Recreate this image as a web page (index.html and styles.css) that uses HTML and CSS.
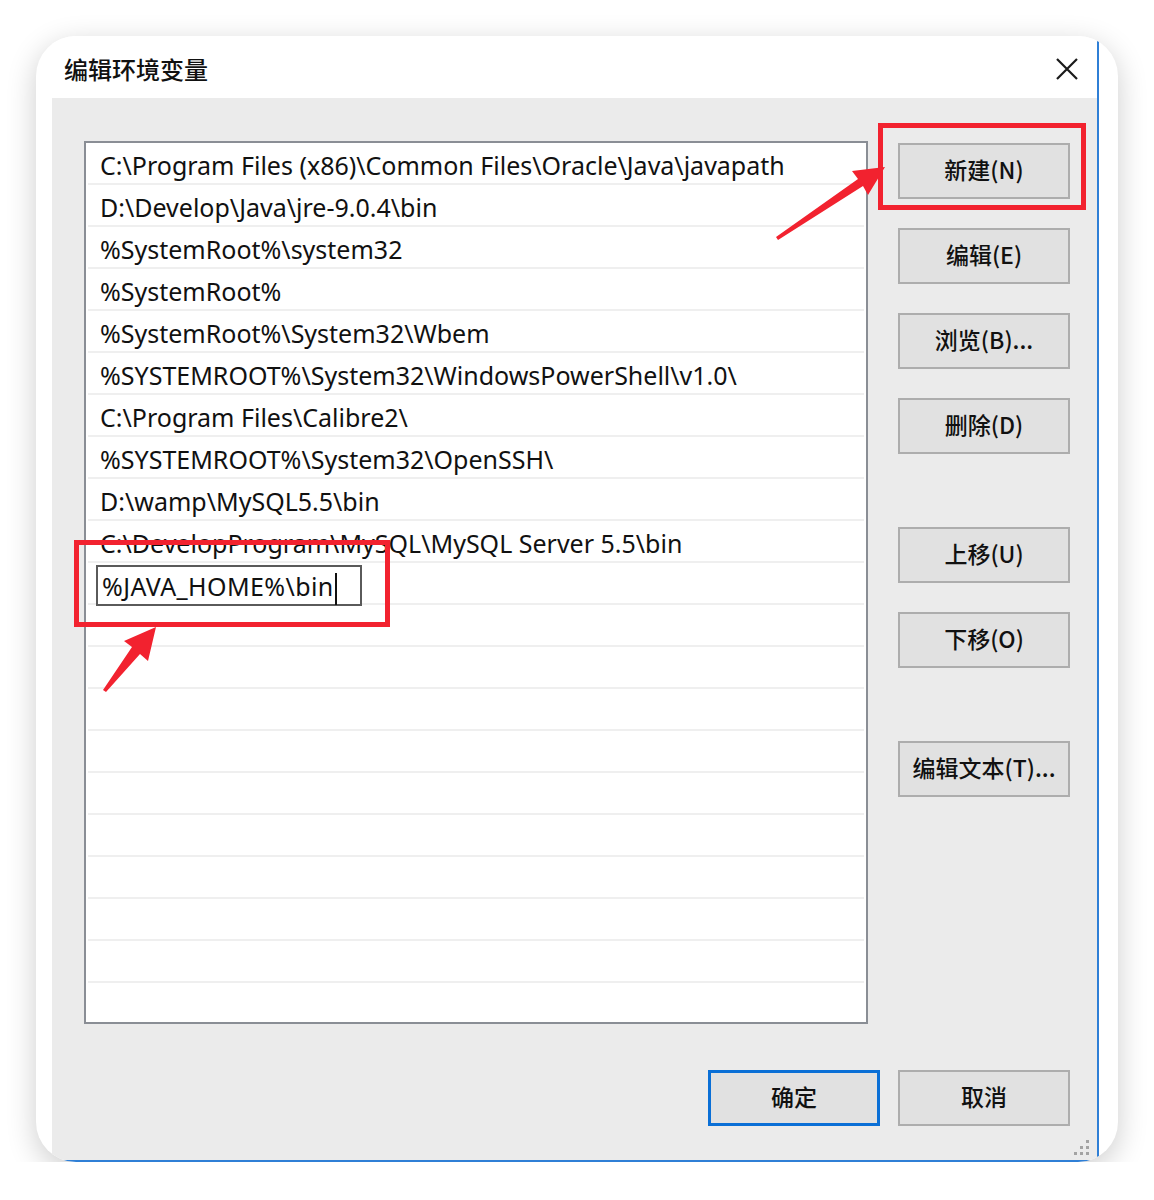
FILE: index.html
```html
<!DOCTYPE html>
<html lang="zh-CN">
<head>
	<meta charset="UTF-8">
	<title>编辑环境变量</title>
	<link rel="stylesheet" href="styles.css">
</head>
<body>
<div class="card">
	<div class="dialog">
		<div class="titlebar">
			<span class="title">编辑环境变量</span>
			<svg class="close" width="22" height="22" viewBox="0 0 22 22"><path d="M1 1L21 21M21 1L1 21" stroke="#1a1a1a" stroke-width="2.2" fill="none"/></svg>
		</div>
		<div class="content">
			<div class="main">
				<ul class="list">
					<li>C:\Program Files (x86)\Common Files\Oracle\Java\javapath</li>
					<li>D:\Develop\Java\jre-9.0.4\bin</li>
					<li>%SystemRoot%\system32</li>
					<li>%SystemRoot%</li>
					<li>%SystemRoot%\System32\Wbem</li>
					<li>%SYSTEMROOT%\System32\WindowsPowerShell\v1.0\</li>
					<li>C:\Program Files\Calibre2\</li>
					<li>%SYSTEMROOT%\System32\OpenSSH\</li>
					<li>D:\wamp\MySQL5.5\bin</li>
					<li>C:\DevelopProgram\MySQL\MySQL Server 5.5\bin</li>
					<li class="editing"><span class="edit">%JAVA_HOME%\bin<i class="caret"></i></span></li>
					<li></li>
					<li></li>
					<li></li>
					<li></li>
					<li></li>
					<li></li>
					<li></li>
					<li></li>
					<li></li>
					<li class="last"></li>
				</ul>
				<div class="side">
					<button class="btn">新建(N)</button>
					<button class="btn">编辑(E)</button>
					<button class="btn">浏览(B)...</button>
					<button class="btn">删除(D)</button>
					<button class="btn far">上移(U)</button>
					<button class="btn">下移(O)</button>
					<button class="btn far">编辑文本(T)...</button>
				</div>
			</div>
			<div class="footer">
				<button class="btn primary">确定</button>
				<button class="btn">取消</button>
			</div>
			<svg class="grip" width="16" height="16" viewBox="0 0 16 16" fill="#a3a3a3">
				<rect x="12" y="0" width="3" height="3"/>
				<rect x="6" y="6" width="3" height="3"/><rect x="12" y="6" width="3" height="3"/>
				<rect x="0" y="12" width="3" height="3"/><rect x="6" y="12" width="3" height="3"/><rect x="12" y="12" width="3" height="3"/>
			</svg>
		</div>
	</div>
</div>
<div class="watermark">CSDN @努力的IT小胖子</div>

<!-- 标注：红框和箭头 -->
<svg class="marks" width="1154" height="1200" viewBox="0 0 1154 1200">
	<rect x="880.5" y="125.5" width="203" height="82" fill="none" stroke="#f2222f" stroke-width="5"/>
	<rect x="76.5" y="542.5" width="311" height="82" fill="none" stroke="#f2222f" stroke-width="5"/>
	<polygon fill="#f2222f" points="776,237 858,179 852,171 885,167 868,195 863,186 778,240"/>
	<polygon fill="#f2222f" points="103,690 132,647 124,641 156,627 148,661 140,654 106,692"/>
</svg>
</body>
</html>
```

FILE: styles.css
```css
body{
	margin:0;
	background:#fff;
	font-family:"Noto Sans","Noto Sans CJK SC",sans-serif;
	color:#111;
}
.card{
	margin:36px 0 0 36px;
	width:1082px;
	height:1126px;
	border-radius:40px;
	background:#fff;
	box-shadow:0 8px 30px rgba(0,0,0,.2);
	overflow:hidden;
}
.dialog{
	margin-left:16px;
	width:1045px;
	border-right:2px solid #2f7fd6;
	border-bottom:2px solid #2f7fd6;
}
.titlebar{
	height:62px;
	background:#fff;
	display:flex;
	align-items:center;
	justify-content:space-between;
	padding:0 19px 0 12px;
}
.title{
	font-family:"Noto Sans CJK SC",sans-serif;
	font-size:24px;
	font-weight:500;
	padding-top:2px;
}
.close{
	margin-top:4px;
}
.content{
	position:relative;
	background:#ebebeb;
	padding:43px 27px 34px 32px;
}
.main{
	display:flex;
	align-items:flex-start;
}
.list{
	list-style:none;
	margin:0;
	padding:0 2px;
	width:778px;
	height:879px;
	border:2px solid #8a8e95;
	background:#fff;
	overflow:hidden;
}
.list li{
	height:42px;
	line-height:40px;
	border-bottom:2px solid #efefef;
	padding:2px 0 0 12px;
	box-sizing:border-box;
	font-size:25px;
	white-space:nowrap;
}
.list li.editing{
	padding:2px 0 0 8px;
	line-height:normal;
}
.edit{
	display:inline-block;
	width:266px;
	height:41px;
	line-height:38px;
	box-sizing:border-box;
	border:2px solid #5a5a5a;
	padding-left:4px;
	letter-spacing:.4px;
	background:#fff;
}
.caret{
	display:inline-block;
	width:2px;
	height:32px;
	background:#111;
	vertical-align:middle;
	margin-left:1px;
}
.side{
	margin-left:30px;
	display:flex;
	flex-direction:column;
	padding-top:2px;
}
.btn{
	width:172px;
	height:56px;
	margin:0;
	background:#e1e1e1;
	border:2px solid #adadad;
	font-family:"Noto Sans CJK SC",sans-serif;
	font-size:23px;
	font-weight:500;
	line-height:1;
	color:#111;
	padding:0 0 4px;
}
.side .btn + .btn{
	margin-top:29px;
}
.side .btn.far{
	margin-top:73px;
}
.footer{
	margin-top:46px;
	display:flex;
	justify-content:flex-end;
	gap:18px;
}
.primary{
	border:3px solid #0a6fd6;
}
.grip{
	position:absolute;
	right:7px;
	bottom:4px;
}
.watermark{
	position:absolute;
	left:932px;
	top:1166px;
	font-family:"Liberation Sans","Noto Sans CJK SC",sans-serif;
	font-size:20px;
	color:rgba(255,255,255,.85);
	white-space:nowrap;
}
.marks{
	position:absolute;
	left:0;
	top:0;
	pointer-events:none;
}
```
